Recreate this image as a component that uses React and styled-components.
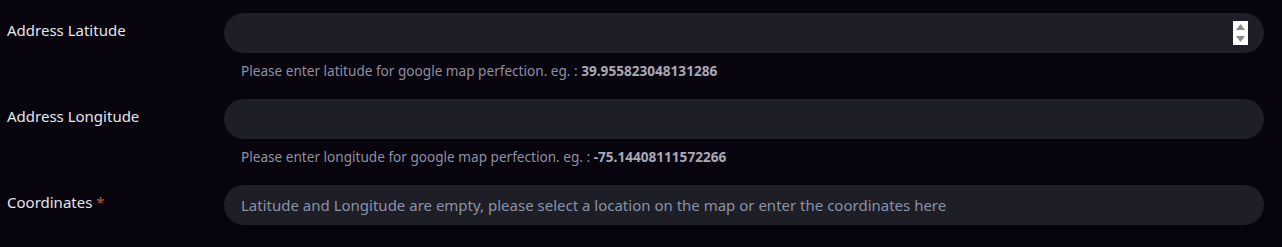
import React from 'react';
import styled, { createGlobalStyle } from 'styled-components';

const GlobalStyle = createGlobalStyle`
  body {
    margin: 0;
    background-color: #07040e;
    font-family: "Noto Sans", "Open Sans", sans-serif;
  }
`;

function Spinner() {
  return (
    <SpinBox>
      <svg width="15" height="24" viewBox="0 0 15 24">
        <polygon points="7.5,3 12,9 3,9" fill="#8a8a8a" />
        <polygon points="3,15 12,15 7.5,21" fill="#8a8a8a" />
      </svg>
    </SpinBox>
  );
}

function Field(props) {
  const { label, required, placeholder, spinner, hint, example } = props;

  return (
    <Row>
      <Label>
        {label}
        {required && <Star> *</Star>}
      </Label>
      <Control>
        <InputWrap>
          <Input placeholder={placeholder} />
          {spinner && <Spinner />}
        </InputWrap>
        {hint && (
          <Hint>
            {hint} <b>{example}</b>
          </Hint>
        )}
      </Control>
    </Row>
  );
}

function App() {
  return (
    <Page>
      <GlobalStyle />
      <Field
        label="Address Latitude"
        spinner
        hint="Please enter latitude for google map perfection. eg. :"
        example="39.955823048131286"
      />
      <Field
        label="Address Longitude"
        hint="Please enter longitude for google map perfection. eg. :"
        example="-75.14408111572266"
      />
      <Field
        label="Coordinates"
        required
        placeholder="Latitude and Longitude are empty, please select a location on the map or enter the coordinates here"
      />
    </Page>
  );
}

const Page = styled.div`
  padding: 13px 18px 0 7px;
  display: flex;
  flex-direction: column;
  gap: 14px;
`;

const Row = styled.div`
  display: grid;
  grid-template-columns: 217px 1fr;
  align-items: start;
`;

const Label = styled.div`
  font-size: 15px;
  line-height: 34px;
  color: #e4e4ea;
`;

const Star = styled.span`
  color: #c2572b;
`;

const Control = styled.div`
  display: flex;
  flex-direction: column;
`;

const InputWrap = styled.div`
  position: relative;
`;

const Input = styled.input`
  box-sizing: border-box;
  width: 100%;
  height: 40px;
  padding: 0 17px;
  border: none;
  border-radius: 20px;
  background-color: #1e1e26;
  color: #e4e4ea;
  font-family: inherit;
  font-size: 15px;
  outline: none;

  &::placeholder {
    color: #8a92a6;
  }
`;

const SpinBox = styled.div`
  position: absolute;
  top: 8px;
  right: 16px;
  width: 15px;
  height: 24px;
  background-color: #fff;
  display: flex;
`;

const Hint = styled.div`
  padding: 10px 0 0 17px;
  height: 22px;
  font-size: 13.6px;
  line-height: 16px;
  color: #8f8fa0;

  b {
    color: #a8a8b6;
    font-weight: 700;
  }
`;

export default App;
